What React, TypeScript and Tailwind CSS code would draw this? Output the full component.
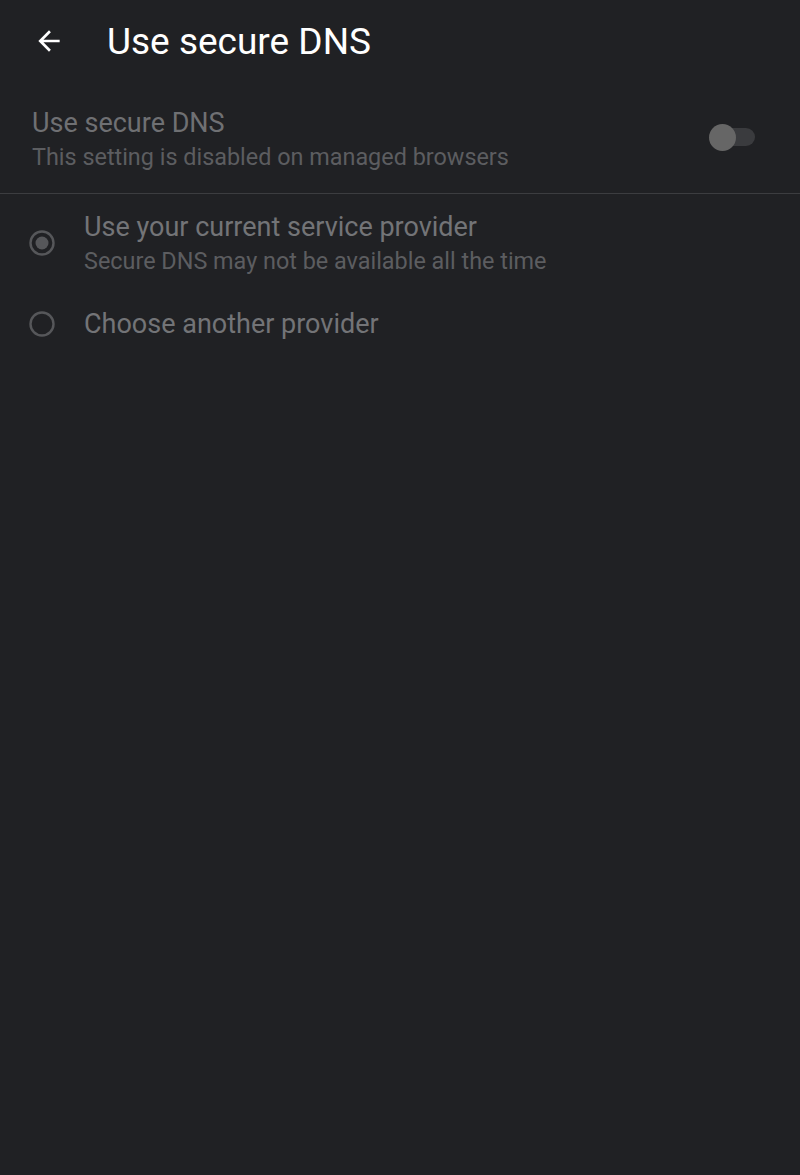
import React from "react";

function ArrowBack() {
  return (
    <svg viewBox="0 0 24 24" className="h-8 w-8 fill-white">
      <path d="M20 11H7.83l5.59-5.59L12 4l-8 8 8 8 1.41-1.41L7.83 13H20v-2z" />
    </svg>
  );
}

function Radio({ checked }: { checked: boolean }) {
  return (
    <svg viewBox="0 0 26 26" className="h-[26px] w-[26px] shrink-0">
      <circle cx="13" cy="13" r="11.5" fill="none" stroke="#56575a" strokeWidth="2.4" />
      {checked && <circle cx="13" cy="13" r="6.5" fill="#56575a" />}
    </svg>
  );
}

const options = [
  {
    id: "current",
    label: "Use your current service provider",
    summary: "Secure DNS may not be available all the time",
    checked: true,
  },
  { id: "other", label: "Choose another provider", checked: false },
];

export default function App() {
  return (
    <div
      className="min-h-[1175px] w-full bg-[#202124]"
      style={{ fontFamily: "Roboto, 'Noto Sans', sans-serif" }}
    >
      <header className="flex h-[82px] items-center pl-[33px]">
        <ArrowBack />
        <h1 className="ml-[42px] text-[37px] leading-none text-white">Use secure DNS</h1>
      </header>

      <div className="flex items-center border-b border-[#3c3d40] pl-8 pr-[45px] pt-[23px] pb-[20px]">
        <div className="flex flex-1 flex-col">
          <span className="text-[27px] leading-[36px] text-[#6f7073]">Use secure DNS</span>
          <span className="text-[23.4px] leading-[32px] text-[#5c5d60]">
            This setting is disabled on managed browsers
          </span>
        </div>
        <div className="relative -mt-[4px] h-[18px] w-[44px]">
          <div className="absolute inset-0 rounded-full bg-[#3a3b3e]" />
          <div className="absolute -left-[2px] -top-[4.5px] h-[27px] w-[27px] rounded-full bg-[#666666]" />
        </div>
      </div>

      <div className="flex flex-col gap-[29px] pt-[15px]">
        {options.map((o) => (
          <div key={o.id} className="flex items-center gap-[29px] pl-[29px]">
            <Radio checked={o.checked} />
            <div className="flex flex-col">
              <span className="text-[27px] leading-[36px] text-[#737477]">{o.label}</span>
              {o.summary && (
                <span className="text-[23.4px] leading-[32px] text-[#5c5d60]">{o.summary}</span>
              )}
            </div>
          </div>
        ))}
      </div>
    </div>
  );
}
